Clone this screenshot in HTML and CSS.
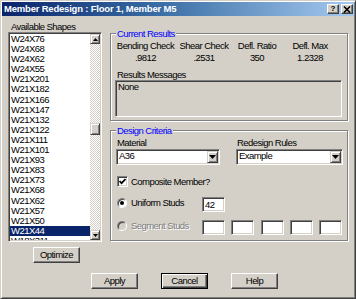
FILE: index.html
```html
<!DOCTYPE html>
<html>
<head>
<meta charset="utf-8">
<link rel="stylesheet" href="styles.css">
</head>
<body>
<div class="window">
  <div class="titlebar">
    <span class="title">Member Redesign : Floor 1, Member M5</span>
    <div class="tbtns">
      <span class="tbtn help">?</span>
      <span class="tbtn close"><svg width="8" height="7" viewBox="0 0 8 7"><path d="M1 0.5 L7 6.5 M7 0.5 L1 6.5" stroke="#000" stroke-width="1.6"/></svg></span>
    </div>
  </div>
  <div class="content">
    <div class="main">
      <div class="leftcol">
        <div class="lbl avail">Available Shapes</div>
        <div class="listbox">
          <div class="items">
            <div class="item">W24X76</div>
            <div class="item">W24X68</div>
            <div class="item">W24X62</div>
            <div class="item">W24X55</div>
            <div class="item">W21X201</div>
            <div class="item">W21X182</div>
            <div class="item">W21X166</div>
            <div class="item">W21X147</div>
            <div class="item">W21X132</div>
            <div class="item">W21X122</div>
            <div class="item">W21X111</div>
            <div class="item">W21X101</div>
            <div class="item">W21X93</div>
            <div class="item">W21X83</div>
            <div class="item">W21X73</div>
            <div class="item">W21X68</div>
            <div class="item">W21X62</div>
            <div class="item">W21X57</div>
            <div class="item">W21X50</div>
            <div class="item sel">W21X44</div>
            <div class="item">W18X311</div>
          </div>
          <div class="vscroll">
            <div class="sbtn"><svg width="5" height="3" viewBox="0 0 5 3"><polygon points="2.5,0 5,3 0,3" fill="#000"/></svg></div>
            <div class="track"><div class="thumb"></div></div>
            <div class="sbtn"><svg width="5" height="3" viewBox="0 0 5 3"><polygon points="0,0 5,0 2.5,3" fill="#000"/></svg></div>
          </div>
        </div>
        <button class="btn optimize">Optimize</button>
      </div>
      <div class="rightcol">
        <fieldset class="group results">
          <legend>Current Results</legend>
          <div class="stats">
            <div class="cell">Bending Check</div>
            <div class="cell">Shear Check</div>
            <div class="cell">Defl. Ratio</div>
            <div class="cell">Defl. Max</div>
            <div class="cell val">.9812</div>
            <div class="cell val">.2531</div>
            <div class="cell val">350</div>
            <div class="cell val">1.2328</div>
          </div>
          <div class="lbl msglbl">Results Messages</div>
          <div class="msgbox">None</div>
        </fieldset>
        <fieldset class="group criteria">
          <legend>Design Criteria</legend>
          <div class="combos">
            <div class="field mat">
              <div class="lbl flbl">Material</div>
              <div class="combo"><span class="ctext">A36</span><span class="dd"><svg width="7" height="4" viewBox="0 0 7 4"><polygon points="0,0 7,0 3.5,4" fill="#000"/></svg></span></div>
            </div>
            <div class="field rules">
              <div class="lbl flbl">Redesign Rules</div>
              <div class="combo"><span class="ctext">Example</span><span class="dd"><svg width="7" height="4" viewBox="0 0 7 4"><polygon points="0,0 7,0 3.5,4" fill="#000"/></svg></span></div>
            </div>
          </div>
          <div class="check-row">
            <span class="checkbox"><svg width="7" height="7" viewBox="0 0 7 7"><path d="M0.5 3 L2.6 5.2 L6.5 1" fill="none" stroke="#000" stroke-width="1.7"/></svg></span>
            <span class="clbl">Composite Member?</span>
          </div>
          <div class="stud-row uniform">
            <div class="opt"><span class="radio on"></span><span class="rlbl">Uniform Studs</span></div>
            <div class="tbox">42</div>
          </div>
          <div class="stud-row segment">
            <div class="opt"><span class="radio off"></span><span class="rlbl dis">Segment Studs</span></div>
            <div class="segs">
              <div class="tbox"></div>
              <div class="tbox"></div>
              <div class="tbox"></div>
              <div class="tbox"></div>
              <div class="tbox"></div>
            </div>
          </div>
        </fieldset>
      </div>
    </div>
    <div class="actions">
      <button class="btn">Apply</button>
      <button class="btn default">Cancel</button>
      <button class="btn">Help</button>
    </div>
  </div>
</div>
</body>
</html>
```

FILE: styles.css
```css
* { box-sizing: border-box; }
html, body { margin: 0; padding: 0; }
body {
  background: #d4d0c8;
  font-family: "Liberation Sans", Arial, sans-serif;
  font-size: 9.5px;
  line-height: 10px;
  letter-spacing: -0.55px;
  color: #000;
}
.window {
  width: 356px;
  height: 299px;
  background: #d4d0c8;
  border: 1px solid;
  border-color: #d4d0c8 #404040 #404040 #d4d0c8;
  box-shadow: inset 1px 1px #fff, inset -1px -1px #808080;
  padding: 1px;
  display: flex;
  flex-direction: column;
}
.titlebar {
  height: 14px;
  flex: none;
  background: linear-gradient(to right, #0a246a 0%, #3a6ea5 45%, #a6caf0 100%);
  display: flex;
  align-items: center;
  padding: 0 1px 0 2px;
  color: #fff;
  font-weight: bold;
  letter-spacing: -0.2px;
}
.title { line-height: 10px; white-space: nowrap; }
.tbtns { margin-left: auto; display: flex; gap: 2px; }
.tbtn {
  width: 12px;
  height: 10px;
  background: #d4d0c8;
  border: 1px solid;
  border-color: #fff #404040 #404040 #fff;
  box-shadow: inset -1px -1px #808080;
  display: flex;
  align-items: center;
  justify-content: center;
  color: #000;
  font-size: 8px;
  line-height: 8px;
  letter-spacing: 0;
}
.content {
  display: flex;
  flex-direction: column;
  padding: 6px 0 0 6px;
}
.main { display: flex; align-items: flex-start; }
.leftcol { width: 94px; display: flex; flex-direction: column; }
.lbl { white-space: nowrap; }
.avail { padding-left: 3px; height: 10px; }
.listbox {
  height: 210px;
  background: #fff;
  border: 1px solid;
  border-color: #808080 #fff #fff #808080;
  box-shadow: inset 1px 1px #404040, inset -1px -1px #d4d0c8;
  padding: 1px;
  display: flex;
}
.items { width: 80px; overflow: hidden; }
.item { height: 10.1px; line-height: 10.1px; padding-left: 1px; white-space: nowrap; }
.item.sel { background: #0a246a; color: #fff; }
.vscroll { width: 10px; display: flex; flex-direction: column; }
.sbtn {
  height: 10px;
  flex: none;
  background: #d4d0c8;
  border: 1px solid;
  border-color: #d4d0c8 #404040 #404040 #d4d0c8;
  box-shadow: inset 1px 1px #fff, inset -1px -1px #808080;
  display: flex;
  align-items: center;
  justify-content: center;
}
.sbtn svg { display: block; }
.track {
  flex: 1;
  background: repeating-conic-gradient(#fff 0 25%, #d4d0c8 0 50%) 0 0 / 2px 2px;
}
.thumb {
  margin-top: 79px;
  height: 12px;
  background: #d4d0c8;
  border: 1px solid;
  border-color: #d4d0c8 #404040 #404040 #d4d0c8;
  box-shadow: inset 1px 1px #fff, inset -1px -1px #808080;
}
.btn {
  font: inherit;
  letter-spacing: inherit;
  color: #000;
  height: 16px;
  width: 47px;
  padding: 0;
  background: #d4d0c8;
  border: 1px solid;
  border-color: #fff #404040 #404040 #fff;
  box-shadow: inset -1px -1px #808080;
  border-radius: 0;
  line-height: 10px;
}
.optimize { margin: 5px 0 0 25px; }
.btn.default {
  border: 1px solid #000;
  box-shadow: inset 1px 1px #fff, inset -1px -1px #404040, inset -2px -2px #808080;
}
.rightcol { margin: 6px 0 0 8px; width: 238px; display: flex; flex-direction: column; }
.group {
  margin: 0;
  min-width: 0;
  width: 238px;
  border: 1px solid #808080;
  box-shadow: inset 1px 1px #fff, 1px 1px #fff;
  padding: 2px 4px 3px 5px;
}
.group legend {
  padding: 0 1px;
  color: #0000ff;
  line-height: 11px;
  background: #d4d0c8;
  white-space: nowrap;
}
.stats {
  display: grid;
  grid-template-columns: 59px 58px 48px 58px;
  row-gap: 2px;
}
.cell { text-align: center; white-space: nowrap; }
.msglbl { margin-top: 7px; padding-left: 1px; }
.msgbox {
  margin-left: -1px;
  height: 37px;
  width: 227px;
  border: 1px solid;
  border-color: #808080 #fff #fff #808080;
  box-shadow: inset 1px 1px #404040, inset -1px -1px #d4d0c8;
  padding: 1px 2px;
}
.criteria { margin-top: 4px; padding-bottom: 5px; }
.combos { display: flex; gap: 16px; }
.field.mat { width: 104px; }
.field.rules { width: 107px; }
.flbl { padding-left: 1px; margin-bottom: 1px; }
.combo {
  height: 16px;
  background: #fff;
  border: 1px solid;
  border-color: #808080 #fff #fff #808080;
  box-shadow: inset 1px 1px #404040, inset -1px -1px #d4d0c8;
  padding: 1px;
  display: flex;
}
.ctext { flex: 1; padding-left: 1px; white-space: nowrap; }
.dd {
  width: 11px;
  background: #d4d0c8;
  border: 1px solid;
  border-color: #d4d0c8 #404040 #404040 #d4d0c8;
  box-shadow: inset 1px 1px #fff, inset -1px -1px #808080;
  display: flex;
  align-items: center;
  justify-content: center;
}
.dd svg { display: block; }
.check-row { margin-top: 11px; display: flex; align-items: center; height: 11px; padding-left: 1px; }
.checkbox {
  width: 11px;
  height: 11px;
  background: #fff;
  border: 1px solid;
  border-color: #808080 #fff #fff #808080;
  box-shadow: inset 1px 1px #404040, inset -1px -1px #d4d0c8;
  display: flex;
  align-items: center;
  justify-content: center;
}
.checkbox svg { display: block; }
.clbl { margin-left: 3px; white-space: nowrap; }
.stud-row { display: flex; align-items: flex-start; }
.uniform { margin-top: 10px; }
.segment { margin-top: 8px; }
.opt { width: 86px; display: flex; align-items: flex-start; padding-left: 1px; }
.radio {
  margin-top: 0.5px;
  width: 10px;
  height: 10px;
  border-radius: 50%;
  background: #fff;
  border: 1px solid;
  border-color: #808080 #fff #fff #808080;
  box-shadow: inset 1px 1px #404040;
  display: flex;
  align-items: center;
  justify-content: center;
}
.radio.on::after {
  content: "";
  width: 4px;
  height: 4px;
  border-radius: 50%;
  background: #000;
}
.radio.off { background: #d4d0c8; }
.rlbl { margin: 0.5px 0 0 4px; white-space: nowrap; }
.rlbl.dis { color: #808080; text-shadow: 1px 1px #fff; }
.tbox {
  width: 23px;
  height: 15px;
  background: #fff;
  border: 1px solid;
  border-color: #808080 #fff #fff #808080;
  box-shadow: inset 1px 1px #404040, inset -1px -1px #d4d0c8;
  padding: 1.5px 2px 0;
}
.segs { display: flex; gap: 6.25px; }
.actions { display: flex; gap: 23px; margin-top: 10px; padding-left: 83px; }
```
